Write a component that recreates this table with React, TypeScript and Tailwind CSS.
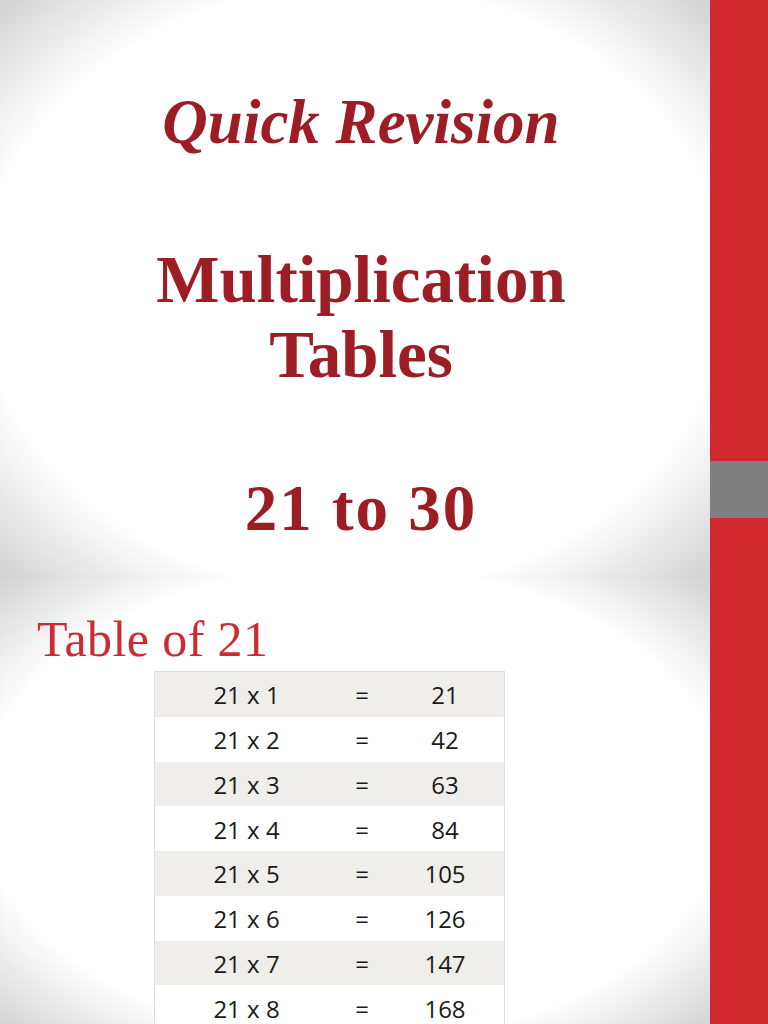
import React from "react";

const rows = Array.from({ length: 8 }, (_, i) => ({ n: i + 1, v: 21 * (i + 1) }));

export default function App() {
  return (
    <div className="flex h-[1024px] w-[768px] overflow-hidden bg-white">
      <div className="flex w-[710px] flex-col">
        {/* title slide */}
        <div className="flex h-[577px] shrink-0 flex-col items-center bg-[radial-gradient(ellipse_at_center,#ffffff_74%,#d2d2d2_100%)] pl-[12px] font-['Liberation_Serif',serif] font-bold text-[#9d1d25]">
          <h1 className="mt-[82px] text-[63px] italic leading-[80px]">Quick Revision</h1>
          <h2 className="mt-[80px] text-center text-[67px] leading-[75px]">
            Multiplication
            <br />
            Tables
          </h2>
          <div className="mt-[76px] text-[65px] leading-[80px] tracking-[2px]">21 to 30</div>
        </div>

        {/* table slide */}
        <div className="flex flex-1 flex-col bg-[radial-gradient(ellipse_at_50%_50%,#ffffff_74%,#d2d2d2_100%)]">
          <div className="ml-[37px] mt-[32px] font-['Liberation_Serif',serif] text-[50px] leading-[60px] tracking-[0.4px] text-[#cc2b33]">
            Table of 21
          </div>
          <div className="ml-[154px] mt-[2px] w-[351px] border-x border-t border-[#dedede] font-['Open_Sans',sans-serif] text-[24px] text-[#1a1a1a]">
            {rows.map((r, i) => (
              <div
                key={r.n}
                className={`grid h-[44.75px] grid-cols-[183px_48px_1fr] items-center pt-[2px] text-center ${
                  i % 2 === 0 ? "bg-[#efeeea]" : "bg-white"
                }`}
              >
                <span>21 x {r.n}</span>
                <span>=</span>
                <span>{r.v}</span>
              </div>
            ))}
          </div>
        </div>
      </div>

      {/* side bar */}
      <div className="flex w-[58px] flex-col">
        <div className="h-[461px] bg-[#d0282f]" />
        <div className="h-[57px] bg-[#7f7f7f]" />
        <div className="flex-1 bg-[#d0282f]" />
      </div>
    </div>
  );
}
